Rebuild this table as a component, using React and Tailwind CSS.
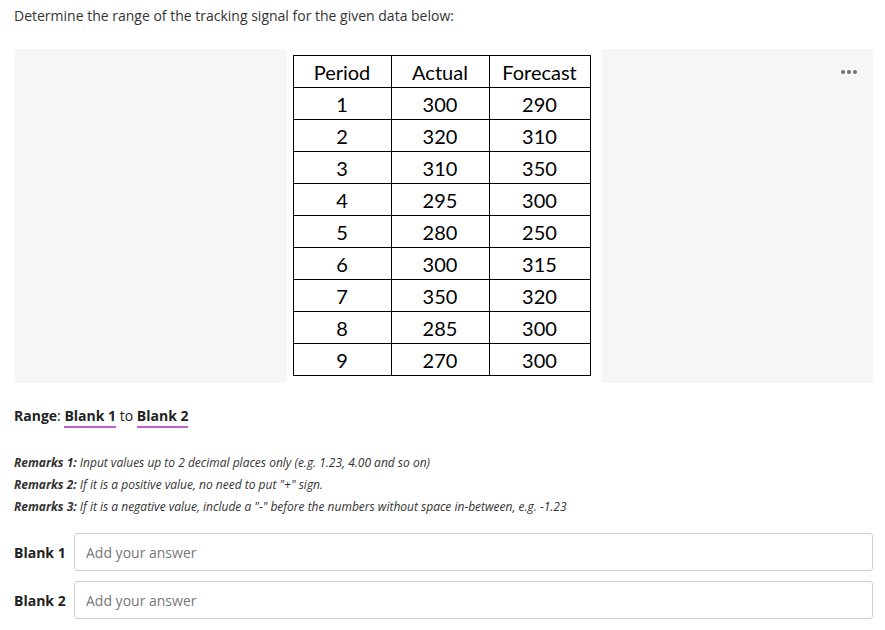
import React from "react";

const rows = [
  ["1", "300", "290"],
  ["2", "320", "310"],
  ["3", "310", "350"],
  ["4", "295", "300"],
  ["5", "280", "250"],
  ["6", "300", "315"],
  ["7", "350", "320"],
  ["8", "285", "300"],
  ["9", "270", "300"],
];

function DataTable() {
  return (
    <div className="w-[315px] h-[334px] bg-white pt-[6px] pl-[6px]">
      <table className="border-collapse font-['Lato',sans-serif] text-[20px] text-black leading-none">
        <thead>
          <tr className="h-[32px]">
            <th className="w-[98px] border border-black font-normal">Period</th>
            <th className="w-[98px] border border-black font-normal">Actual</th>
            <th className="w-[101px] border border-black font-normal">Forecast</th>
          </tr>
        </thead>
        <tbody>
          {rows.map((r) => (
            <tr key={r[0]} className="h-[32px]">
              {r.map((c, i) => (
                <td key={i} className="border border-black text-center">
                  {c}
                </td>
              ))}
            </tr>
          ))}
        </tbody>
      </table>
    </div>
  );
}

function BlankInput({ label }) {
  return (
    <div className="flex items-center">
      <span className="w-[60px] font-bold text-[14px] text-[#222]">{label}</span>
      <input
        className="flex-1 h-[38px] border border-[#cfcfcf] rounded-[3px] px-[11px] text-[14px] text-[#333] placeholder:text-[#777] outline-none"
        placeholder="Add your answer"
      />
    </div>
  );
}

export default function App() {
  return (
    <div className="min-h-screen w-full bg-white font-['Open_Sans',sans-serif] text-[#333] pl-[14px] pr-[12px]">
      <p className="pt-[6px] text-[14px] leading-[20px]">
        Determine the range of the tracking signal for the given data below:
      </p>

      <div className="relative mt-[23px] h-[334px] bg-[#f6f6f6] flex justify-center pl-[1px]">
        <DataTable />
        <div className="absolute right-[16px] top-[21px] flex gap-[2px]">
          <span className="w-[4px] h-[4px] rounded-full bg-[#6f6f6f]" />
          <span className="w-[4px] h-[4px] rounded-full bg-[#6f6f6f]" />
          <span className="w-[4px] h-[4px] rounded-full bg-[#6f6f6f]" />
        </div>
      </div>

      <p className="mt-[23px] text-[14px] leading-[20px] text-[#222]">
        <span className="font-bold">Range</span>:{" "}
        <span className="font-bold border-b-2 border-[#c060cf] pb-[1px]">Blank 1</span> to{" "}
        <span className="font-bold border-b-2 border-[#c060cf] pb-[1px]">Blank 2</span>
      </p>

      <div className="mt-[26px] text-[12px] italic leading-[22px] text-[#333]">
        <p>
          <span className="font-bold">Remarks 1:</span> Input values up to 2 decimal places only (e.g. 1.23, 4.00 and so on)
        </p>
        <p>
          <span className="font-bold">Remarks 2:</span> If it is a positive value, no need to put "+" sign.
        </p>
        <p>
          <span className="font-bold">Remarks 3:</span> If it is a negative value, include a "-" before the numbers without space in-between, e.g. -1.23
        </p>
      </div>

      <div className="mt-[15px] flex flex-col gap-[10px]">
        <BlankInput label="Blank 1" />
        <BlankInput label="Blank 2" />
      </div>
    </div>
  );
}
